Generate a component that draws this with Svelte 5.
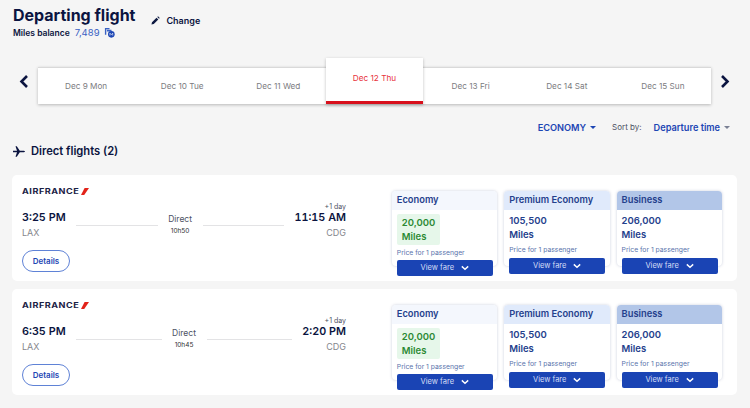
<script>
  const days = ['Dec 9 Mon', 'Dec 10 Tue', 'Dec 11 Wed', 'Dec 12 Thu', 'Dec 13 Fri', 'Dec 14 Sat', 'Dec 15 Sun'];
  const flights = [
    { dep: '3:25 PM', arr: '11:15 AM', time: '10h50' },
    { dep: '6:35 PM', arr: '2:20 PM', time: '10h45' }
  ];
</script>

<div class="page">
  <header class="head">
    <div>
      <h1>Departing flight</h1>
      <div class="balance">
        <b>Miles balance</b>
        <span class="miles">7,489</span>
        <svg class="wallet" width="11" height="11" viewBox="0 0 12 12">
          <path d="M1 1h5v1.500h-3.500v6h-1.500zM3.200 3h5v2h-5z" fill="#3a62c4" />
          <circle cx="8" cy="8" r="3.600" fill="#1d46b4" />
          <path d="M6.500 9.300v-2.500l1.500 1.500 1.500-1.500v2.500" stroke="#fff" stroke-width=".7" fill="none" />
        </svg>
      </div>
    </div>
    <div class="change">
      <svg width="9" height="9" viewBox="0 0 10 10">
        <path d="M0.500 9.500l.6-2.600 5-5 2 2-5 5zM7 1.100l.8-.7 1.900 1.900-.8.8z" fill="#0e1a42" />
      </svg>
      Change
    </div>
  </header>

  <section class="dates">
    <svg class="arrow" width="10" height="15" viewBox="0 0 10 15">
      <path d="M8 2l-5.500 5.500 5.500 5.500" fill="none" stroke="#0b1440" stroke-width="2.600" />
    </svg>
    <div class="strip">
      {#each days as day, i}
        <div class="day" class:active={i === 3}>{day}</div>
      {/each}
    </div>
    <svg class="arrow" width="10" height="15" viewBox="0 0 10 15">
      <path d="M2 2l5.500 5.500-5.500 5.500" fill="none" stroke="#0b1440" stroke-width="2.600" />
    </svg>
  </section>

  <div class="sort">
    <span class="pick">ECONOMY <i class="caret"></i></span>
    <span class="label">Sort by:</span>
    <span class="pick">Departure time <i class="caret grey"></i></span>
  </div>

  <h2>
    <svg width="12" height="11" viewBox="0 0 12 11">
      <path d="M0 4.700h4l-1.500-4.500h1.300l3 4.500h3.200c1.300 0 2 .4 2 .8s-.7.8-2 .8h-3.200l-3 4.500h-1.300l1.500-4.500h-4l-.1 1.200h-.9l.2-1.700v-.6l-.2-1.700h.9z" fill="#0b1440" />
    </svg>
    Direct flights (2)
  </h2>

  {#each flights as f}
    <article class="flight">
      <div class="info">
        <div class="logo">
          <span>AIRFRANCE</span>
          <svg width="8" height="7" viewBox="0 0 8 7"><path d="M3.600 0h4.400l-4.800 7h-3.200z" fill="#e2231a" /></svg>
        </div>
        <div class="day-plus">+1 day</div>
        <div class="times">
          <div class="point">
            <strong>{f.dep}</strong>
            <span>LAX</span>
          </div>
          <div class="line"></div>
          <div class="mid">
            <span>Direct</span>
            <small>{f.time}</small>
          </div>
          <div class="line"></div>
          <div class="point end">
            <strong>{f.arr}</strong>
            <span>CDG</span>
          </div>
        </div>
        <button class="details">Details</button>
      </div>

      <div class="fares">
        <div class="fare">
          <div class="fare-name eco">Economy</div>
          <div class="fare-body low">
            <div class="price green">20,000<br />Miles</div>
            <p>Price for 1 passenger</p>
          </div>
          <button class="view">View fare <svg width="8" height="6" viewBox="0 0 10 6"><path d="M1 1l4 3.500 4-3.500" fill="none" stroke="#fff" stroke-width="1.800" /></svg></button>
        </div>
        <div class="fare">
          <div class="fare-name prem">Premium Economy</div>
          <div class="fare-body">
            <div class="price">105,500<br />Miles</div>
            <p>Price for 1 passenger</p>
          </div>
          <button class="view">View fare <svg width="8" height="6" viewBox="0 0 10 6"><path d="M1 1l4 3.500 4-3.500" fill="none" stroke="#fff" stroke-width="1.800" /></svg></button>
        </div>
        <div class="fare">
          <div class="fare-name bus">Business</div>
          <div class="fare-body">
            <div class="price">206,000<br />Miles</div>
            <p>Price for 1 passenger</p>
          </div>
          <button class="view">View fare <svg width="8" height="6" viewBox="0 0 10 6"><path d="M1 1l4 3.500 4-3.500" fill="none" stroke="#fff" stroke-width="1.800" /></svg></button>
        </div>
      </div>
    </article>
  {/each}
</div>

<style>
  :global(body) {
    margin: 0;
    background: #f5f5f5;
  }
  .page {
    height: 408px;
    overflow: hidden;
    box-sizing: border-box;
    padding: 5px 13px 0 12px;
    font-family: Inter, "Open Sans", sans-serif;
    color: #0b1440;
  }
  .head {
    display: flex;
    padding-left: 1px;
    height: 53px;
  }
  h1 {
    margin: 0;
    font-size: 16px;
    line-height: 20px;
    font-weight: 700;
  }
  .balance {
    display: flex;
    align-items: center;
    gap: 5px;
    margin-top: 2px;
    font-size: 8.500px;
    line-height: 12px;
  }
  .balance b {
    font-weight: 600;
  }
  .miles {
    color: #3a62c4;
    font-size: 9.500px;
  }
  .wallet {
    margin: -1px 0 0 -1px;
  }
  .change {
    display: flex;
    align-items: center;
    gap: 6px;
    margin: 9px 0 0 16px;
    height: 12px;
    font-size: 9px;
    font-weight: 600;
  }
  .dates {
    display: flex;
    align-items: center;
    gap: 9px;
    height: 46px;
    padding-left: 7px;
  }
  .strip {
    display: grid;
    grid-template-columns: repeat(7, 1fr);
    align-self: flex-end;
    width: 673px;
    height: 37px;
    background: #fff;
    border-top: 1px solid #d9d9d9;
    box-sizing: border-box;
    box-shadow: 0 1px 3px rgba(0, 0, 0, 0.25);
  }
  .day {
    display: flex;
    align-items: center;
    justify-content: center;
    font-size: 8.200px;
    color: #7b7b80;
  }
  .active {
    margin-top: -10px;
    background: #fff;
    color: #e8323c;
    border-bottom: 3px solid #d8101c;
    box-shadow: 0 1px 3px rgba(0, 0, 0, 0.25);
    padding-bottom: 4px;
  }
  .sort {
    display: flex;
    justify-content: flex-end;
    align-items: center;
    height: 12px;
    margin-top: 17px;
    padding-right: 7px;
    font-size: 9.200px;
  }
  .pick {
    color: #1d46b4;
    font-weight: 600;
    display: flex;
    align-items: center;
    gap: 4px;
  }
  .label {
    color: #4d5264;
    font-size: 8px;
    margin: 0 12px 0 16px;
  }
  .caret {
    border: 3px solid transparent;
    border-top: 3px solid #1d46b4;
    border-bottom: 0;
  }
  .caret.grey {
    border-top-color: #7a8094;
  }
  h2 {
    display: flex;
    align-items: center;
    gap: 6px;
    margin: 10px 0 16px 1px;
    height: 16px;
    font-size: 11.200px;
    font-weight: 600;
  }
  .flight {
    display: flex;
    justify-content: space-between;
    width: 725px;
    height: 106px;
    margin-bottom: 8px;
    background: #fff;
    border-radius: 5px;
    box-sizing: border-box;
    padding: 0 15px 0 10px;
  }
  .info {
    width: 324px;
    padding-top: 12px;
  }
  .logo {
    display: flex;
    align-items: center;
    height: 9px;
    font-size: 7px;
    font-weight: 700;
    letter-spacing: 0.4px;
    color: #1a2145;
  }
  .logo span {
    width: 59px;
    transform: scaleX(1.3);
    transform-origin: left;
  }
  .day-plus {
    text-align: right;
    font-size: 7px;
    line-height: 9px;
    margin-top: 6px;
    color: #4d5264;
  }
  .times {
    display: flex;
    align-items: center;
    gap: 10px;
  }
  .point {
    display: flex;
    flex-direction: column;
    gap: 3px;
  }
  .point strong {
    font-size: 10.800px;
    line-height: 13px;
    font-weight: 600;
    font-variant-numeric: tabular-nums;
  }
  .point span {
    font-size: 9px;
    line-height: 12px;
    color: #85868c;
  }
  .end {
    text-align: right;
  }
  .line {
    flex: 1;
    height: 1px;
    background: #e3e3e5;
  }
  .mid {
    display: flex;
    flex-direction: column;
    align-items: center;
    width: 25px;
  }
  .mid span {
    font-size: 8.500px;
    line-height: 13px;
    color: #4d5264;
  }
  .mid small {
    font-size: 6.500px;
    line-height: 11px;
    color: #333;
  }
  .details {
    display: block;
    width: 48px;
    height: 22px;
    margin-top: 11px;
    padding: 0;
    border: 1px solid #5f82d6;
    border-radius: 12px;
    background: #fff;
    color: #1d46b4;
    font: 600 8px Inter, sans-serif;
  }
  .fares {
    display: flex;
    gap: 7px;
    padding-top: 16px;
  }
  .fare {
    width: 105.400px;
    height: 75px;
    box-sizing: border-box;
    border-radius: 4px;
    background: #fff;
    box-shadow: 0 0 3px rgba(40, 60, 120, 0.25);
  }
  .fare-name {
    height: 19px;
    line-height: 18px;
    padding-left: 5px;
    font-size: 9.300px;
    font-weight: 600;
    color: #24408c;
    border-radius: 4px 4px 0 0;
  }
  .eco {
    background: #f4f7fd;
  }
  .prem {
    background: #e0eafb;
  }
  .bus {
    background: #b2c6e8;
  }
  .fare-body {
    box-sizing: border-box;
    height: 48px;
    padding: 4px 5px 0;
  }
  .fare-body.low {
    height: 50px;
  }
  .price {
    font-size: 9.500px;
    line-height: 14px;
    font-weight: 600;
    color: #24408c;
  }
  .green {
    width: 43px;
    height: 31px;
    padding: 2px 0 0 5px;
    box-sizing: border-box;
    border-radius: 2px;
    background: #e6f7ea;
    color: #2c8a34;
  }
  p {
    margin: 3px 0 0;
    font-size: 6.800px;
    line-height: 10px;
    color: #5a74ac;
    white-space: nowrap;
  }
  .view {
    display: flex;
    align-items: center;
    justify-content: center;
    gap: 7px;
    width: 96px;
    height: 15.500px;
    margin-left: 5px;
    padding: 0;
    border: 0;
    border-radius: 2px;
    background: #1a44b4;
    color: #d5def6;
    font: 7.500px Inter, sans-serif;
    position: relative;
  }
</style>
